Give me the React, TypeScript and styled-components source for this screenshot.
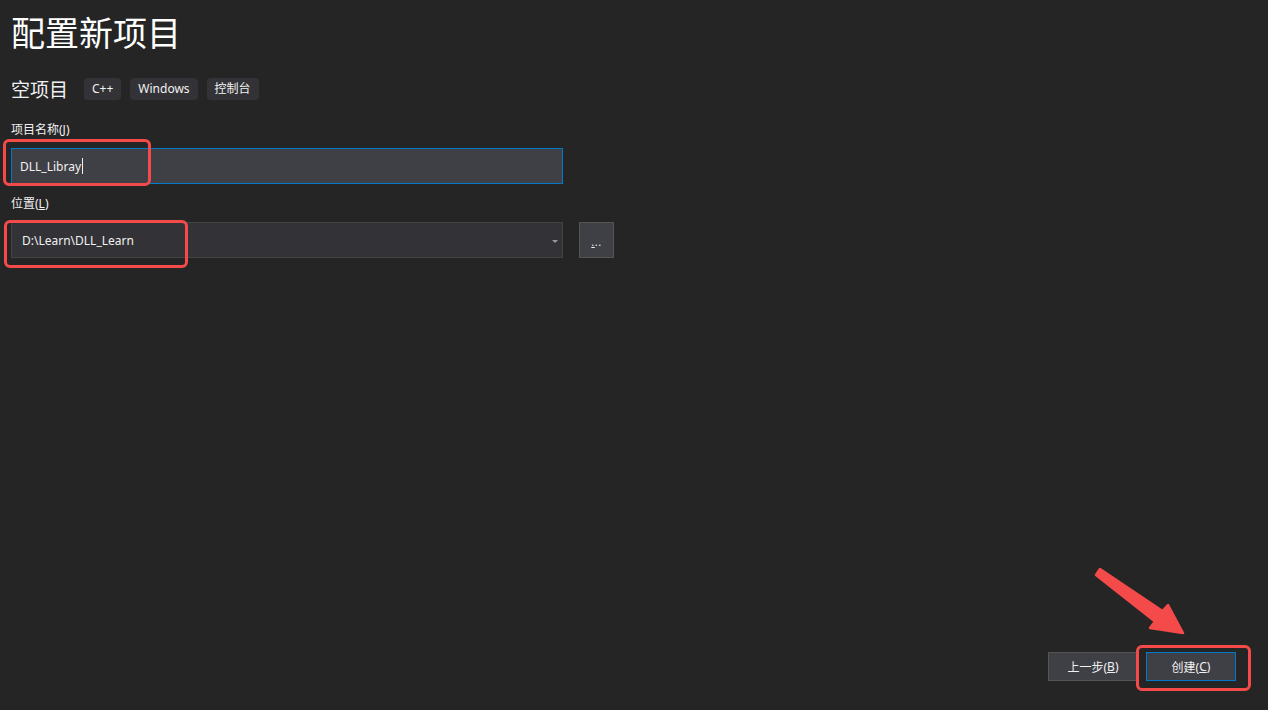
import React from 'react';
import styled, { createGlobalStyle } from 'styled-components';

const GlobalStyle = createGlobalStyle`
  html, body {
    margin: 0;
    padding: 0;
    background: #252526;
  }
  body {
    font-family: "Noto Sans", "Noto Sans CJK SC", sans-serif;
    color: #f1f1f1;
  }
`;

const App = () => {
  return (
    <Page>
      <GlobalStyle />
      <Title>配置新项目</Title>

      <SubRow>
        <SubTitle>空项目</SubTitle>
        <Tag>C++</Tag>
        <Tag>Windows</Tag>
        <Tag>控制台</Tag>
      </SubRow>

      <FieldLabel>
        项目名称(<u>J</u>)
      </FieldLabel>
      <TextBox>
        DLL_Libray
        <Caret />
      </TextBox>

      <FieldLabel $gap={12}>
        位置(<u>L</u>)
      </FieldLabel>
      <PathRow>
        <Combo>
          <span>D:\Learn\DLL_Learn</span>
          <DropArrow />
        </Combo>
        <BrowseButton>
          <u>.</u>..
        </BrowseButton>
      </PathRow>

      <Footer>
        <ActionButton>
          上一步(<u>B</u>)
        </ActionButton>
        <ActionButton $primary>
          创建(<u>C</u>)
        </ActionButton>
      </Footer>

      {/* red annotation marks drawn over the dialog */}
      <Mark $left={3} $top={139} $width={148} $height={47} />
      <Mark $left={4} $top={220} $width={184} $height={48} />
      <Mark $left={1136} $top={645} $width={115} $height={46} />
      <Arrow viewBox="0 0 110 85" width={110} height={85}>
        <polygon
          points="10,9 72.5,51 78,45 93,73 60,68 65,61.5 6,15"
          fill="#f44a4a"
          stroke="#f44a4a"
          strokeWidth={2.5}
          strokeLinejoin="round"
        />
      </Arrow>
    </Page>
  );
};

const Page = styled.div`
  position: relative;
  height: 710px;
  box-sizing: border-box;
  padding: 8px 32px 29px 11px;
  display: flex;
  flex-direction: column;
  overflow: hidden;
`;

const Title = styled.h1`
  margin: 0;
  font-family: "Noto Sans CJK SC", sans-serif;
  font-size: 34px;
  font-weight: 400;
  line-height: 48px;
  color: #ffffff;
`;

const SubRow = styled.div`
  display: flex;
  align-items: center;
  gap: 9px;
  margin-top: 22px;
`;

const SubTitle = styled.h2`
  margin: 0 7px 0 0;
  font-family: "Noto Sans CJK SC", sans-serif;
  font-size: 19px;
  font-weight: 400;
  line-height: 22px;
`;

const Tag = styled.span`
  height: 22px;
  line-height: 22px;
  padding: 0 8px;
  font-size: 12px;
  background: #333337;
  border-radius: 4px;
`;

const FieldLabel = styled.div<{ $gap?: number }>`
  margin-top: ${(p) => p.$gap ?? 22}px;
  margin-bottom: 10px;
  font-size: 12px;
  line-height: 16px;
`;

const TextBox = styled.div`
  width: 552px;
  height: 36px;
  box-sizing: border-box;
  display: flex;
  align-items: center;
  padding-left: 8px;
  background: #3f3f46;
  border: 1px solid #007acc;
  font-size: 12px;
`;

const Caret = styled.span`
  display: inline-block;
  width: 1px;
  height: 16px;
  margin-left: 1px;
  background: #f1f1f1;
`;

const PathRow = styled.div`
  display: flex;
  gap: 16px;
`;

const Combo = styled.div`
  width: 552px;
  height: 36px;
  box-sizing: border-box;
  display: flex;
  align-items: center;
  justify-content: space-between;
  padding: 0 4px 0 10px;
  background: #333337;
  border: 1px solid #434346;
  font-size: 12px;
`;

const DropArrow = styled.span`
  width: 0;
  height: 0;
  margin-top: 2px;
  border-left: 3px solid transparent;
  border-right: 3px solid transparent;
  border-top: 3px solid #999999;
`;

const BrowseButton = styled.div`
  width: 35px;
  height: 36px;
  box-sizing: border-box;
  display: flex;
  align-items: flex-end;
  justify-content: center;
  padding-bottom: 9px;
  background: #3f3f46;
  border: 1px solid #555555;
  font-size: 11px;
  line-height: 12px;
  letter-spacing: 0.5px;
`;

const Footer = styled.div`
  margin-top: auto;
  display: flex;
  justify-content: flex-end;
  gap: 8px;
`;

const ActionButton = styled.div<{ $primary?: boolean }>`
  width: 90px;
  height: 29px;
  box-sizing: border-box;
  display: flex;
  align-items: center;
  justify-content: center;
  background: #3f3f46;
  border: 1px solid ${(p) => (p.$primary ? '#007acc' : '#555555')};
  font-size: 12px;
`;

const Mark = styled.div<{ $left: number; $top: number; $width: number; $height: number }>`
  position: absolute;
  left: ${(p) => p.$left}px;
  top: ${(p) => p.$top}px;
  width: ${(p) => p.$width}px;
  height: ${(p) => p.$height}px;
  box-sizing: border-box;
  border: 3px solid #f44a4a;
  border-radius: 6px;
  pointer-events: none;
`;

const Arrow = styled.svg`
  position: absolute;
  left: 1090px;
  top: 560px;
  pointer-events: none;
`;

export default App;
